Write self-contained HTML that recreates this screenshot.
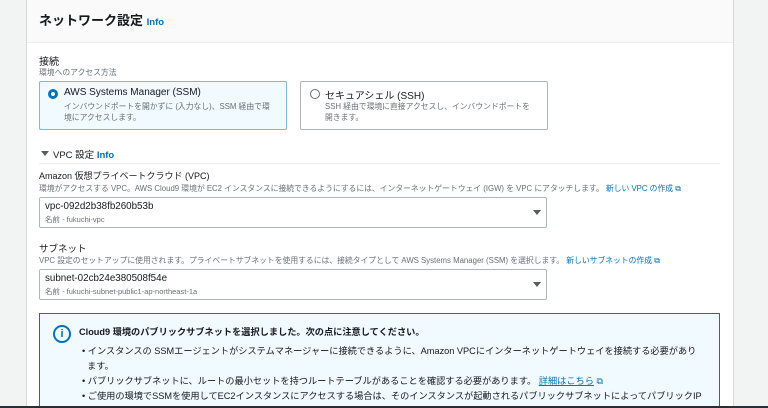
<!DOCTYPE html>
<html><head><meta charset="utf-8"><style>
*{margin:0;padding:0;box-sizing:border-box}
html,body{width:768px;height:408px;overflow:hidden}
body{background:#f2f3f3;font-family:"Liberation Sans","Noto Sans CJK JP",sans-serif;color:#16191f;position:relative}
.a{position:absolute;white-space:nowrap}
.panel{position:absolute;left:26px;top:-2px;width:708px;height:420px;background:#fff;border:1px solid #d5dbdb}
.hdr{position:absolute;left:0;top:0;width:100%;height:44px;background:#fafafa;border-bottom:1px solid #eaeded}
.info{color:#0073bb;font-weight:bold}
.sub{font-size:7.8px;color:#687078}
.card{position:absolute;border:1px solid #aab7b8;border-radius:2px;background:#fff}
.sel{position:absolute;left:39px;width:508px;height:31px;border:1px solid #aab7b8;border-radius:2px;background:#fff}
.tri{position:absolute;width:0;height:0;border-left:4px solid transparent;border-right:4px solid transparent;border-top:5px solid #545b64}
.lk{color:#0073bb}
</style></head><body>
<div class="panel"><div class="hdr"></div></div>
<div class="a" style="left:39px;top:10px;font-size:13px;font-weight:bold">ネットワーク設定 <span class="info" style="font-size:9.5px">Info</span></div>
<div class="a" style="left:39px;top:53px;font-size:10px">接続</div>
<div class="a sub" style="left:39px;top:67px">環境へのアクセス方法</div>
<div class="card" style="left:39px;top:81px;width:248px;height:49px;background:#f1faff;border-color:#79b8e0"></div>
<div class="a" style="left:48px;top:89px;width:10px;height:10px;border-radius:50%;border:3px solid #0073bb;background:#fff"></div>
<div class="a" style="left:64px;top:87px;font-size:10px">AWS Systems Manager (SSM)</div>
<div class="a sub" style="left:64px;top:101px;line-height:11px">インバウンドポートを開かずに (入力なし)、SSM 経由で環<br>境にアクセスします。</div>
<div class="card" style="left:300px;top:81px;width:248px;height:49px"></div>
<div class="a" style="left:310px;top:89px;width:10px;height:10px;border-radius:50%;border:1px solid #687078;background:#fff"></div>
<div class="a" style="left:325px;top:87px;font-size:10px">セキュアシェル (SSH)</div>
<div class="a sub" style="left:325px;top:101px;line-height:11px">SSH 経由で環境に直接アクセスし、インバウンドポートを<br>開きます。</div>
<div class="tri" style="left:41px;top:151px"></div>
<div class="a" style="left:53px;top:147px;font-size:9.5px">VPC 設定 <span class="info">Info</span></div>
<div class="a" style="left:39px;top:163px;width:681px;height:1px;background:#eaeded"></div>
<div class="a" style="left:39px;top:169px;font-size:9px">Amazon 仮想プライベートクラウド (VPC)</div>
<div class="a sub" style="left:39px;top:183px">環境がアクセスする VPC。AWS Cloud9 環境が EC2 インスタンスに接続できるようにするには、インターネットゲートウェイ (IGW) を VPC にアタッチします。 <span class="lk">新しい VPC の作成 ⧉</span></div>
<div class="sel" style="top:197px"></div>
<div class="a" style="left:45px;top:201px;font-size:9.8px">vpc-092d2b38fb260b53b</div>
<div class="a sub" style="left:45px;top:214px;font-size:7.5px">名前 - fukuchi-vpc</div>
<div class="tri" style="left:533px;top:210px"></div>
<div class="a" style="left:39px;top:241px;font-size:9.5px">サブネット</div>
<div class="a sub" style="left:39px;top:255px">VPC 設定のセットアップに使用されます。プライベートサブネットを使用するには、接続タイプとして AWS Systems Manager (SSM) を選択します。 <span class="lk">新しいサブネットの作成 ⧉</span></div>
<div class="sel" style="top:269px"></div>
<div class="a" style="left:45px;top:273px;font-size:9.8px">subnet-02cb24e380508f54e</div>
<div class="a sub" style="left:45px;top:286px;font-size:7.5px">名前 - fukuchi-subnet-public1-ap-northeast-1a</div>
<div class="tri" style="left:533px;top:282px"></div>
<div class="a" style="left:39px;top:313px;width:681px;height:100px;background:#f1faff;border:1px solid #0073bb"></div>
<div class="a" style="left:53px;top:325px;width:18px;height:18px;border-radius:50%;border:2px solid #0073bb;color:#0073bb;font-weight:bold;font-size:11px;text-align:center;line-height:14px">i</div>
<div class="a" style="left:79px;top:324px;font-size:9.2px;font-weight:bold">Cloud9 環境のパブリックサブネットを選択しました。次の点に注意してください。</div>
<div class="a" style="left:82px;top:344px;font-size:9.2px;line-height:15px">• インスタンスの SSMエージェントがシステムマネージャーに接続できるように、Amazon VPCにインターネットゲートウェイを接続する必要があり<br>&nbsp;&nbsp;ます。<br>• パブリックサブネットに、ルートの最小セットを持つルートテーブルがあることを確認する必要があります。 <span class="lk" style="text-decoration:underline">詳細はこちら</span> <span class="lk">⧉</span><br>• ご使用の環境でSSMを使用してEC2インスタンスにアクセスする場合は、そのインスタンスが起動されるパブリックサブネットによってパブリックIP</div>
<div class="a" style="left:0;top:406px;width:768px;height:2px;background:#2a2e33"></div>
</body></html>
